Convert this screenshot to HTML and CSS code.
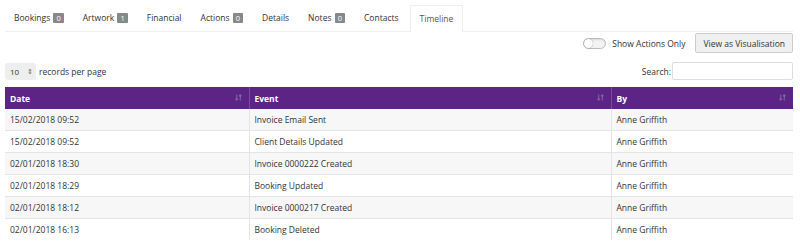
FILE: index.html
```html
<!DOCTYPE html>
<html lang="en">
<head>
    <meta charset="UTF-8">
    <meta name="viewport" content="width=device-width, initial-scale=1.0">
    <title>Timeline</title>
    <link rel="stylesheet" href="styles.css">
</head>
<body>
    <div class="page">
        <ul class="tabs">
            <li>Bookings <span class="badge">0</span></li>
            <li>Artwork <span class="badge">1</span></li>
            <li>Financial</li>
            <li>Actions <span class="badge">0</span></li>
            <li>Details</li>
            <li>Notes <span class="badge">0</span></li>
            <li>Contacts</li>
            <li class="active">Timeline</li>
        </ul>

        <div class="toolbar">
            <label class="switch"><span class="knob"></span></label>
            <span class="switch-label">Show Actions Only</span>
            <button class="btn">View as Visualisation</button>
        </div>

        <div class="table-top">
            <div class="length">
                <span class="select">10 <span class="arrows">&#8661;</span></span>
                records per page
            </div>
            <div class="search">
                Search:<input type="text">
            </div>
        </div>

        <table class="timeline">
            <colgroup>
                <col class="c-date">
                <col class="c-event">
                <col class="c-by">
            </colgroup>
            <thead>
                <tr>
                    <th>Date <svg class="sort" viewBox="0 0 8 8"><path d="M2 0.5V7M0.5 5.5L2 7L3.5 5.5M6 7.5V1M4.5 2.5L6 1L7.5 2.5"/></svg></th>
                    <th>Event <svg class="sort" viewBox="0 0 8 8"><path d="M2 0.5V7M0.5 5.5L2 7L3.5 5.5M6 7.5V1M4.5 2.5L6 1L7.5 2.5"/></svg></th>
                    <th>By <svg class="sort" viewBox="0 0 8 8"><path d="M2 0.5V7M0.5 5.5L2 7L3.5 5.5M6 7.5V1M4.5 2.5L6 1L7.5 2.5"/></svg></th>
                </tr>
            </thead>
            <tbody>
                <tr><td>15/02/2018 09:52</td><td>Invoice Email Sent</td><td>Anne Griffith</td></tr>
                <tr><td>15/02/2018 09:52</td><td>Client Details Updated</td><td>Anne Griffith</td></tr>
                <tr><td>02/01/2018 18:30</td><td>Invoice 0000222 Created</td><td>Anne Griffith</td></tr>
                <tr><td>02/01/2018 18:29</td><td>Booking Updated</td><td>Anne Griffith</td></tr>
                <tr><td>02/01/2018 18:12</td><td>Invoice 0000217 Created</td><td>Anne Griffith</td></tr>
                <tr><td>02/01/2018 16:13</td><td>Booking Deleted</td><td>Anne Griffith</td></tr>
            </tbody>
        </table>
    </div>
</body>
</html>
```

FILE: styles.css
```css
body {
    font-family: "Open Sans", Arial, sans-serif;
    font-size: 8.5px;
    color: #333;
    margin: 0;
    background: #fff;
}

.page {
    padding: 5px 7px 0 5px;
}

.tabs {
    list-style: none;
    margin: 0;
    padding: 0;
    display: flex;
    height: 26px;
    box-shadow: 0 1px 0 #f0f0f0;
}

.tabs li {
    padding: 0 10px 0 9px;
    line-height: 25px;
    white-space: nowrap;
}

.tabs li.active {
    border: 1px solid #eee;
    border-bottom: none;
    background: #fff;
    color: #555;
    position: relative;
    padding: 0 9px;
    height: 26px;
    margin-left: 1px;
}

.badge {
    display: inline-block;
    background: #888;
    color: #fff;
    font-size: 7.5px;
    line-height: 10px;
    padding: 0 3px;
    margin-left: 1px;
    border-radius: 1px;
    vertical-align: 0;
}

.toolbar {
    display: flex;
    justify-content: flex-end;
    align-items: center;
    margin-top: 2px;
    height: 20px;
}

.switch {
    width: 21px;
    height: 9px;
    border: 1px solid #bbb;
    border-radius: 6px;
    background: #f3f3f3;
    position: relative;
    box-shadow: inset 0 1px 2px rgba(0,0,0,0.1);
}

.knob {
    position: absolute;
    left: 0;
    top: 0;
    width: 9px;
    height: 9px;
    border-radius: 50%;
    background: #fff;
    box-shadow: 0 0 1px rgba(0,0,0,0.5);
}

.switch-label {
    margin: 0 10px 0 6px;
}

.btn {
    font-family: inherit;
    font-size: 8.5px;
    color: #333;
    background: #f0f0f0;
    border: 1px solid #ccc;
    border-radius: 2px;
    height: 20px;
    padding: 0 7px;
}

.table-top {
    display: flex;
    justify-content: space-between;
    align-items: center;
    margin-top: 9px;
    height: 18px;
}

.length {
    display: flex;
    align-items: center;
}

.select {
    display: inline-flex;
    justify-content: space-between;
    align-items: center;
    width: 31px;
    height: 17px;
    box-sizing: border-box;
    padding: 0 3px 0 5px;
    background: #eee;
    border-radius: 3px;
    margin-right: 3px;
    font-size: 8px;
}

.arrows {
    font-size: 7px;
    color: #666;
}

.search {
    display: flex;
    align-items: center;
}

.search input {
    width: 121px;
    height: 18px;
    box-sizing: border-box;
    border: 1px solid #ddd;
    border-radius: 2px;
    margin: 0 0 0 1px;
    padding: 0;
}

.timeline {
    width: 788px;
    border-collapse: collapse;
    margin-top: 7px;
}

.c-date { width: 244px; }
.c-event { width: 362px; }
.c-by { width: 182px; }

.timeline th {
    background: #5b2485;
    color: #fff;
    font-weight: bold;
    text-align: left;
    height: 22px;
    padding: 0 5px;
    border-left: 1px solid #7a4c9e;
    position: relative;
}

.timeline th:first-child {
    border-left: none;
}

.sort {
    position: absolute;
    right: 7px;
    top: 7px;
    width: 7px;
    height: 7px;
    fill: none;
    stroke: #8466a3;
    stroke-width: 1.2;
}

.timeline td {
    height: 21px;
    padding: 0 5px;
    border-top: 1px solid #e4e4e4;
    border-left: 1px solid #e4e4e4;
}

.timeline td:first-child {
    border-left: none;
}

.timeline tbody tr:first-child td {
    border-top: none;
}

.timeline tbody tr:nth-child(odd) {
    background: #f7f7f7;
}
```
